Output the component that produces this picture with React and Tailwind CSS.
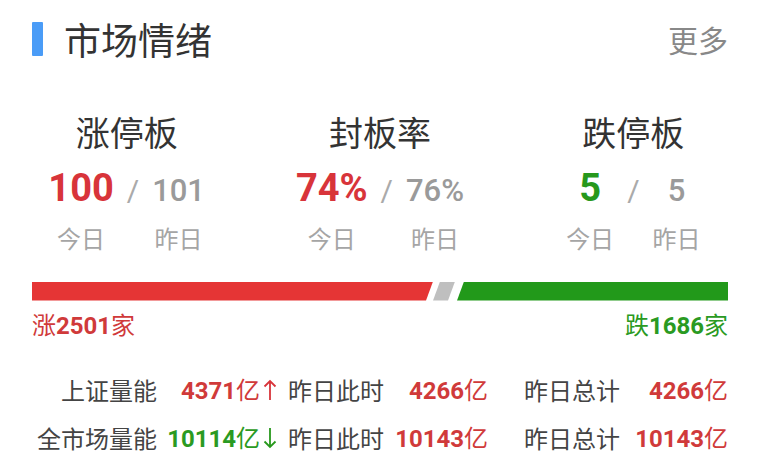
import React from 'react';

const CJK = "font-['Noto_Sans_CJK_SC',sans-serif]";
const NUM = "font-['Roboto','Noto_Sans_CJK_SC',sans-serif]";

const stats = [
  { title: '涨停板', today: '100', yesterday: '101', tone: 'text-[#d8343a]' },
  { title: '封板率', today: '74%', yesterday: '76%', tone: 'text-[#d8343a]' },
  { title: '跌停板', today: '5', yesterday: '5', tone: 'text-[#27981c]' },
];

const volumes = [
  { name: '上证量能', now: '4371', up: true, same: '4266', total: '4266' },
  { name: '全市场量能', now: '10114', up: false, same: '10143', total: '10143' },
];

function Stat({ title, today, yesterday, tone }) {
  return (
    <div className="flex flex-col items-center">
      <div className="text-[34px] leading-[40px] text-[#333]">{title}</div>
      <div className="mt-[13px] grid grid-cols-[auto_auto_auto] items-baseline justify-items-center gap-x-[13px] gap-y-[11px]">
        <span className={`${NUM} text-[38px] font-bold leading-[46px] ${tone}`}>{today}</span>
        <span className={`${NUM} text-[30px] text-[#aaa]`}>/</span>
        <span className={`${NUM} text-[31px] font-medium text-[#9a9a9a]`}>{yesterday}</span>
        <span className="text-[24px] leading-[24px] text-[#a5a5a5]">今日</span>
        <span />
        <span className="text-[24px] leading-[24px] text-[#a5a5a5]">昨日</span>
      </div>
    </div>
  );
}

function Arrow({ up }) {
  return (
    <svg width="14" height="22" viewBox="0 0 14 22" className={up ? 'text-[#d8343a]' : 'text-[#27981c]'}>
      {up ? (
        <path d="M7 21V2M1.5 7.5L7 2l5.5 5.5" fill="none" stroke="currentColor" strokeWidth="1.8" />
      ) : (
        <path d="M7 1v19M1.5 14.5L7 20l5.5-5.5" fill="none" stroke="currentColor" strokeWidth="1.8" />
      )}
    </svg>
  );
}

function Amount({ value, className }) {
  return (
    <span className={className}>
      <span className={`${NUM} font-bold`}>{value}</span>亿
    </span>
  );
}

export default function App() {
  return (
    <div className={`${CJK} h-[467px] w-[760px] overflow-hidden bg-white`}>
      <header className="flex h-[78px] items-center justify-between px-8">
        <div className="flex items-center gap-[21px]">
          <span className="h-[34px] w-[11px] rounded-[1px] bg-[#4a9cf7]" />
          <h1 className="text-[37px] leading-none text-[#333]">市场情绪</h1>
        </div>
        <span className="text-[30px] leading-none text-[#888]">更多</span>
      </header>

      <div className="mt-[34px] grid grid-cols-3">
        {stats.map((s) => (
          <Stat key={s.title} {...s} />
        ))}
      </div>

      <div className="px-8">
        {/* up / flat / down split */}
        <div className="mt-[32px] flex h-[19px]">
          <div className="flex-[2501] bg-[#e53535] [clip-path:polygon(0_0,100%_0,calc(100%_-_7px)_100%,0_100%)]" />
          <div className="w-[22px] bg-[#bfbfbf] [clip-path:polygon(7px_0,100%_0,15px_100%,0_100%)]" />
          <div className="w-[273px] bg-[#22991a] [clip-path:polygon(9px_0,100%_0,100%_100%,2px_100%)]" />
        </div>

        <div className="mt-[11px] flex justify-between text-[24px] leading-[24px]">
          <span className="text-[#d03a3a]">
            涨<span className={`${NUM} font-bold`}>2501</span>家
          </span>
          <span className="text-[#2a9a22]">
            跌<span className={`${NUM} font-bold`}>1686</span>家
          </span>
        </div>

        <div className="mt-[39px] grid grid-cols-[125px_103px_28px_98px_102px_132px_108px] items-center gap-y-[22px] text-[24px] leading-[24px]">
          {volumes.map((v) => (
            <React.Fragment key={v.name}>
              <span className="text-right text-[#444]">{v.name}</span>
              <Amount value={v.now} className={`text-right ${v.up ? 'text-[#d03a3a]' : 'text-[#2a9a22]'}`} />
              <span className="flex pl-[3px]">
                <Arrow up={v.up} />
              </span>
              <span className="text-[#444]">昨日此时</span>
              <Amount value={v.same} className="text-right text-[#d03a3a]" />
              <span className="text-right text-[#444]">昨日总计</span>
              <Amount value={v.total} className="text-right text-[#d03a3a]" />
            </React.Fragment>
          ))}
        </div>
      </div>
    </div>
  );
}
